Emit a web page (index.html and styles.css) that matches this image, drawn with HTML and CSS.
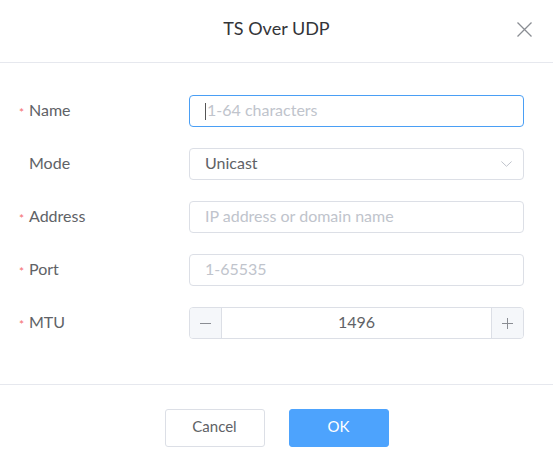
FILE: index.html
```html
<!DOCTYPE html>
<html lang="en">
<head>
<meta charset="utf-8">
<title>TS Over UDP</title>
<link rel="stylesheet" href="styles.css">
</head>
<body>
<div class="dialog">
  <div class="header">
    <span class="title">TS Over UDP</span>
    <button class="close" aria-label="Close">
      <svg width="15" height="15" viewBox="0 0 15 15"><path d="M0.5 0.5L14.5 14.5M14.5 0.5L0.5 14.5" stroke="#8a8d93" stroke-width="1.3" fill="none"/></svg>
    </button>
  </div>
  <div class="body">
    <div class="row">
      <label class="label"><span class="req">*</span>Name</label>
      <div class="field input focus"><span class="caret"></span><span class="ph">1-64 characters</span></div>
    </div>
    <div class="row">
      <label class="label"><span class="req none">*</span>Mode</label>
      <div class="field input select"><span class="val">Unicast</span>
        <svg class="chev" width="11" height="6" viewBox="0 0 11 6"><path d="M0.4 0.5L5.5 5.3L10.6 0.5" stroke="#c0c4cc" stroke-width="1" fill="none"/></svg>
      </div>
    </div>
    <div class="row">
      <label class="label"><span class="req">*</span>Address</label>
      <div class="field input"><span class="ph">IP address or domain name</span></div>
    </div>
    <div class="row">
      <label class="label"><span class="req">*</span>Port</label>
      <div class="field input"><span class="ph">1-65535</span></div>
    </div>
    <div class="row">
      <label class="label"><span class="req">*</span>MTU</label>
      <div class="field stepper">
        <span class="step minus"><svg width="11" height="11" viewBox="0 0 11 11"><path d="M0 5.5H11" stroke="#8a8d93" stroke-width="1"/></svg></span>
        <span class="num">1496</span>
        <span class="step plus"><svg width="11" height="11" viewBox="0 0 11 11"><path d="M0 5.5H11M5.5 0V11" stroke="#8a8d93" stroke-width="1"/></svg></span>
      </div>
    </div>
  </div>
  <div class="footer">
    <button class="btn cancel">Cancel</button>
    <button class="btn ok">OK</button>
  </div>
</div>
</body>
</html>
```
FILE: styles.css
```css
* { box-sizing: border-box; }
html, body { margin: 0; padding: 0; background: #fff; }
body { font-family: Lato, "Noto Sans", sans-serif; color: #606266; }
.dialog { width: 553px; height: 466px; background: #fff; display: flex; flex-direction: column; }
.header {
  height: 63px; border-bottom: 1px solid #e6e8ee;
  display: flex; align-items: center; justify-content: center; position: relative;
  padding-bottom: 6px;
}
.title { font-size: 18px; color: #333438; }
.close {
  position: absolute; right: 21px; top: 22px; width: 15px; height: 15px;
  padding: 0; border: 0; background: none; display: block;
}
.close svg { display: block; }
.body { padding: 32px 29px 45px 0; display: flex; flex-direction: column; gap: 21px; }
.row { display: flex; align-items: center; height: 32px; }
.label { width: 189px; height: 32px; display: flex; align-items: center; font-size: 16px; color: #606266; padding-left: 19px; padding-bottom: 4px; }
.req { color: #f56c6c; font-size: 12px; width: 10px; position: relative; top: 3px; }
.req.none { visibility: hidden; }
.field { flex: 1; height: 32px; border: 1px solid #dcdfe6; border-radius: 4px; display: flex; align-items: center; }
.input { padding-left: 15px; padding-right: 11px; font-size: 16px; padding-bottom: 4px; }
.input.focus { border-color: #4a9ff5; }
.caret { width: 1px; height: 17px; background: #555; margin-right: 1px; position: relative; top: 2px; }
.ph { color: #c0c4cc; }
.val { color: #606266; flex: 1; }
.select { justify-content: space-between; }
.chev { margin-right: 0; position: relative; top: 2px; }
.stepper { overflow: hidden; }
.step { width: 32px; height: 100%; background: #f5f7fa; display: flex; align-items: center; justify-content: center; }
.step svg { display: block; }
.minus { border-right: 1px solid #dcdfe6; }
.plus { border-left: 1px solid #dcdfe6; }
.num { flex: 1; text-align: center; font-size: 16px; color: #606266; padding-bottom: 4px; }
.footer { border-top: 1px solid #e6e8ee; display: flex; justify-content: center; gap: 24px; padding-top: 24px; }
.btn { width: 100px; height: 38px; border-radius: 3px; font-family: Lato, "Noto Sans", sans-serif; font-size: 15px; cursor: pointer; padding: 0 0 4px; }
.cancel { background: #fff; border: 1px solid #dcdfe6; color: #606266; }
.ok { background: #4da3fd; border: 1px solid #4da3fd; color: #fff; }
```
